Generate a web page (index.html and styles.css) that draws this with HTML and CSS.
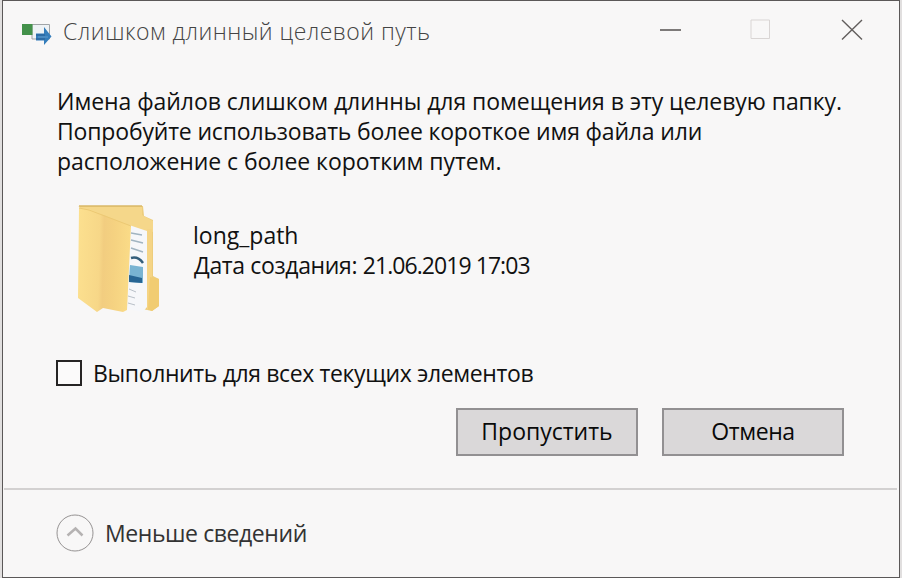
FILE: index.html
```html
<!DOCTYPE html>
<html lang="ru">
<head>
<meta charset="utf-8">
<title>Слишком длинный целевой путь</title>
<link rel="stylesheet" href="styles.css">
</head>
<body>
<main class="dialog">
  <header class="titlebar">
    <svg class="app-icon" width="30" height="23" viewBox="0 0 30 23">
      <path d="M10 1.5H27.5V16H10z" fill="#eef2f5" stroke="#a0a4a7"/>
      <path d="M0 1H10.500V12H0z" fill="#43914a"/>
      <path d="M14 10.500H22V4L29.500 13.500L22 22V17.500H14z" fill="#347dbb"/>
      <path d="M14 12H23M14 16H23" stroke="#275d91"/>
      <path d="M16 14H26" stroke="#5291c4" stroke-width="1.500"/>
    </svg>
    <h1 class="title">Слишком длинный целевой путь</h1>
    <svg class="controls" width="204" height="24" viewBox="0 0 204 24" fill="none">
      <path d="M1 13H22" stroke="#55514f" stroke-width="1.500"/>
      <path d="M92 3H110.500V21.500H92z" stroke="#d9d5d4"/>
      <path d="M183 3L203 22.500M203 3L183 22.500" stroke="#625e5d" stroke-width="1.400"/>
    </svg>
  </header>
  <section class="content">
    <p class="message"><span class="l1">Имена файлов слишком длинны для помещения в эту целевую папку.</span><br><span class="l2">Попробуйте использовать более короткое имя файла или</span><br><span class="l3">расположение с более коротким путем.</span></p>
    <div class="item">
      <svg class="folder" width="84" height="110" viewBox="0 0 84 110">
        <defs>
          <linearGradient id="front" x1="0" x2="1" y1="0" y2="0.050">
            <stop offset="0" stop-color="#fce08f"/><stop offset="0.420" stop-color="#f7d788"/><stop offset="0.500" stop-color="#f2cd80"/><stop offset="0.700" stop-color="#f5d281"/><stop offset="1" stop-color="#fadb87"/>
          </linearGradient>
        </defs>
        <path d="M1 1H66L67 11L76 15V71L82 74V101L75 106L51 101L49 20z" fill="#edcd7c"/>
        <path d="M2 2H65V10L76 16V27L52 24L5 5z" fill="#f5d78a"/>
        <path d="M2 1H65" stroke="#dab968" stroke-width="1.500"/>
        <path d="M52 20L70 26V102L66 107L50 104z" fill="#f6f7fa"/>
        <path d="M70 24H75V101L70 105z" fill="#f5d485"/>
        <path d="M73 72L82 74V101L75 106L71 104z" fill="#f1cc72"/>
        <path d="M54 28L65 30M54 35L66 38M54 43L66 47" stroke="#a1b4c1" stroke-width="1.500"/>
        <path d="M54 53Q61 51 66 58" stroke="#345e7b" stroke-width="2.500" fill="none"/>
        <path d="M53 60L66 62V78L52 77z" fill="#78b3d2"/>
        <path d="M52 70L65 73V78L52 77z" fill="#276594"/>
        <path d="M52 84L59 87M51 91L58 93M51 98L58 100" stroke="#b9c0c8"/>
        <path d="M2 3L12 4L54 21L50 105L46 107L26 103L20 107L1 93z" fill="url(#front)"/>
        <path d="M2 3L12 5L54 21" stroke="#ecc974" fill="none"/>
      </svg>
      <div class="details"><div><span class="name">long_path</span></div><div><span class="date">Дата создания: <span class="stamp">21.06.2019 17:03</span></span></div></div>
    </div>
    <label class="check"><input type="checkbox"><span class="all">Выполнить для всех текущих элементов</span></label>
    <div class="actions"><button><span class="skip">Пропустить</span></button><button><span class="cancel">Отмена</span></button></div>
  </section>
  <footer class="footer">
    <svg width="40" height="40" viewBox="0 0 40 40" fill="none"><circle cx="20" cy="19" r="18" stroke="#969393"/><path d="M12.500 21.500L20.500 14.500L27.500 21.500" stroke="#b5b2b2" stroke-width="2.500"/></svg>
    <span class="less">Меньше сведений</span>
  </footer>
</main>
</body>
</html>
```
FILE: styles.css
```css
* { box-sizing: border-box; }
body { margin: 0; background: #e1dfdf; font: 23px/30px "Open Sans", "Noto Sans", sans-serif; color: #111; overflow: hidden; }
.dialog { width: 898px; height: 578px; margin-left: 2px; display: flex; flex-direction: column; background: #f8f7f7; border: 1px solid #5b5858; }
.titlebar { height: 60px; flex: none; display: flex; align-items: flex-start; padding: 16px 36px 0 19px; }
.app-icon { margin-top: 6px; flex: none; }
.title { font: inherit; font-weight: 300; color: #444; margin: -1px 0 0 11px; white-space: nowrap; letter-spacing: 0.46px; }
.controls { margin-left: auto; flex: none; }
.content { padding: 25px 55px 0 54px; height: 427px; flex: none; }
.message { margin: 0; white-space: nowrap; }
.l1 { letter-spacing: -0.07px; }
.l2 { letter-spacing: -0.17px; }
.l3 { letter-spacing: -0.06px; }
.item { display: flex; height: 110px; margin: 29px 0 0 20px; }
.details { margin: 15px 0 0 32px; white-space: nowrap; }
.date { margin-left: 1px; letter-spacing: -0.35px; }
.stamp { letter-spacing: -0.94px; }
.check { display: flex; align-items: center; height: 30px; margin-top: 43px; white-space: nowrap; }
.check input { appearance: none; width: 26px; height: 26px; margin: 0 11px 0 -1px; border: 2px solid #262424; background: #fbfafa; }
.all { letter-spacing: -0.37px; }
.actions { display: flex; justify-content: flex-end; gap: 24px; margin-top: 20px; }
button { width: 182px; height: 48px; padding: 0 0 2px; border: 2px solid #929092; border-radius: 0; background: #dad8d9; font: inherit; color: #090909; }
.cancel { letter-spacing: -0.4px; }
.footer { flex: 1; margin: 0 2px 0 1px; padding: 0 0 0 51px; border-top: 2px solid #d3d1d1; display: flex; align-items: center; color: #333; }
.less { margin: -2px 0 0 10px; white-space: nowrap; letter-spacing: -0.42px; }
```
